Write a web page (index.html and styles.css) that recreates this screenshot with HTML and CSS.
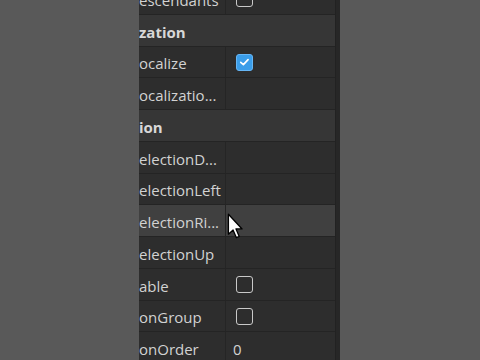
FILE: index.html
```html
<!DOCTYPE html>
<html>
<head>
<meta charset="utf-8">
<link rel="stylesheet" href="styles.css">
</head>
<body>
<div class="frame">
  <div class="side"></div>
  <div class="panel">
    <div class="list">
      <div class="row"><div class="name">escendants</div><div class="value"><span class="cb"></span></div></div>
      <div class="row header"><div class="name">zation</div></div>
      <div class="row"><div class="name">ocalize</div><div class="value"><span class="cb checked"><svg viewBox="0 0 16 16" width="16" height="16"><path d="M4 8.3 L6.8 10.8 L11.8 5.4" fill="none" stroke="#ffffff" stroke-width="1.8" stroke-linecap="round" stroke-linejoin="round"/></svg></span></div></div>
      <div class="row"><div class="name">ocalizatio...</div><div class="value"></div></div>
      <div class="row header"><div class="name">ion</div></div>
      <div class="row"><div class="name">electionD...</div><div class="value"></div></div>
      <div class="row"><div class="name">electionLeft</div><div class="value"></div></div>
      <div class="row hover"><div class="name">electionRi...</div><div class="value"></div></div>
      <div class="row"><div class="name">electionUp</div><div class="value"></div></div>
      <div class="row"><div class="name">able</div><div class="value"><span class="cb"></span></div></div>
      <div class="row"><div class="name">onGroup</div><div class="value"><span class="cb"></span></div></div>
      <div class="row"><div class="name">onOrder</div><div class="value"><span class="num">0</span></div></div>
    </div>
    <div class="scroll"></div>
    <svg class="cursor" viewBox="0 0 13 21" width="17" height="27"><path d="M1 1 L1 16.5 L4.6 13.2 L7.2 19.2 L9.4 18.2 L6.9 12.4 L11.6 12.4 Z" fill="#ffffff" stroke="#000000" stroke-width="1" stroke-linejoin="round"/></svg>
  </div>
  <div class="side"></div>
</div>
</body>
</html>
```
FILE: styles.css
```css
html, body {
  margin: 0;
  padding: 0;
  background: #595959;
}
.frame {
  width: 480px;
  height: 360px;
  display: flex;
  overflow: hidden;
}
.side {
  width: 139px;
  flex: none;
  background: #595959;
}
.side:last-child {
  width: 140px;
}
.panel {
  position: relative;
  width: 201px;
  flex: none;
  background: #2d2d2d;
  display: flex;
  overflow: hidden;
}
.list {
  flex: 1;
  margin-top: -17px;
  display: flex;
  flex-direction: column;
}
.row {
  display: flex;
  height: 30.75px;
  flex: none;
  border-bottom: 1px solid #242424;
  background: #2d2d2d;
  font-family: "Open Sans", "Noto Sans", sans-serif;
  font-size: 15px;
  color: #d2d2d2;
}
.row.header {
  background: #363636;
  font-weight: bold;
  color: #d8d8d8;
}
.row.hover {
  background: #404040;
}
.name {
  width: 87px;
  flex: none;
  border-right: 1px solid #252525;
  white-space: nowrap;
  overflow: hidden;
  display: flex;
  align-items: center;
  padding-top: 3px;
  box-sizing: border-box;
}
.header .name {
  width: auto;
  flex: 1;
  border-right: none;
}
.value {
  flex: 1;
  display: flex;
  align-items: center;
  padding-left: 10px;
  padding-top: 1px;
}
.cb {
  width: 17px;
  height: 17px;
  box-sizing: border-box;
  border: 1.5px solid #c9c9c9;
  border-radius: 3px;
  display: block;
}
.cb.checked {
  border: 1px solid #66b6f5;
  background: #3a9de9;
  display: flex;
  align-items: center;
  justify-content: center;
}
.cb.checked svg {
  display: block;
}
.num {
  margin-left: -3px;
  padding-top: 2px;
}
.scroll {
  width: 4px;
  flex: none;
  background: #272727;
  border-left: 1px solid #222222;
}
.cursor {
  position: absolute;
  left: 88px;
  top: 213px;
}
```
